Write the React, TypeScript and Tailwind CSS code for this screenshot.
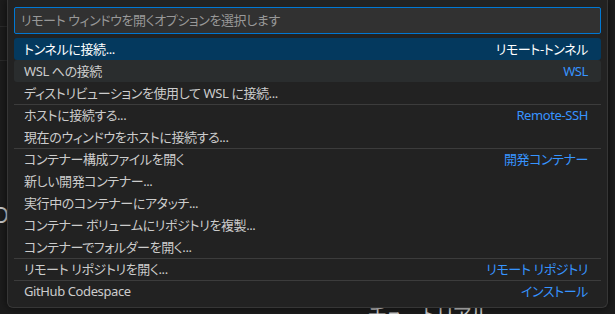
import React from "react";

type Item = {
  label: string;
  group?: string;
  separator?: boolean;
  state?: "active" | "hover";
};

const items: Item[] = [
  { label: "トンネルに接続...", group: "リモート-トンネル", state: "active" },
  { label: "WSL への接続", group: "WSL", state: "hover" },
  { label: "ディストリビューションを使用して WSL に接続..." },
  { label: "ホストに接続する...", group: "Remote-SSH", separator: true },
  { label: "現在のウィンドウをホストに接続する..." },
  { label: "コンテナー構成ファイルを開く", group: "開発コンテナー", separator: true },
  { label: "新しい開発コンテナー..." },
  { label: "実行中のコンテナーにアタッチ..." },
  { label: "コンテナー ボリュームにリポジトリを複製..." },
  { label: "コンテナーでフォルダーを開く..." },
  { label: "リモート リポジトリを開く...", group: "リモート リポジトリ", separator: true },
  { label: "GitHub Codespace", group: "インストール", separator: true },
];

function Row({ item }: { item: Item }) {
  const bg =
    item.state === "active"
      ? "bg-[#04395e] text-white rounded-[3px]"
      : item.state === "hover"
      ? "bg-[#2a2d2e] text-[#cccccc] rounded-[3px]"
      : "text-[#cccccc]";
  return (
    <div className={item.separator ? "border-t border-[#3c3c3c]" : ""}>
      <div
        className={`flex items-center justify-between pl-[10px] pr-[13px] pt-[1px] text-[13px] ${
          item.separator ? "h-[21px]" : "h-[22px]"
        } ${bg}`}
      >
        <span className="whitespace-nowrap">{item.label}</span>
        {item.group && (
          <span
            className={`whitespace-nowrap ${
              item.state === "active" ? "text-white" : "text-[#3794ff]"
            }`}
          >
            {item.group}
          </span>
        )}
      </div>
    </div>
  );
}

export default function App() {
  return (
    <div className="relative w-[615px] h-[314px] overflow-hidden bg-[#1c1c1c] font-['Noto_Sans','Noto_Sans_CJK_JP',sans-serif] [font-feature-settings:'palt'] tracking-[-0.4px] pl-[7px]">
      {/* editor content behind the quick pick */}
      <div className="absolute left-0 top-[26px] w-[8px] border-t border-[#2b2b2b]" />
      <div className="absolute left-0 top-[60px] w-[8px] border-t border-[#2b2b2b]" />
      <div className="absolute left-[-8px] top-[201px] text-[22px] leading-[26px] text-[#cccccc]">
        O
      </div>
      <div className="absolute left-[368px] top-[304px] text-[20px] leading-[24px] text-[#cccccc]">
        チュートリアル
      </div>

      {/* quick pick */}
      <div className="relative w-[601px] h-[308px] bg-[#222222] border-x border-b border-[#363636] rounded-b-[6px] shadow-[0_0_8px_rgba(0,0,0,0.6)] px-[6px] pt-[7px] flex flex-col gap-[4px]">
        <div className="h-[27px] flex items-center border border-[#0078d4] bg-[#313131] rounded-[2px] px-[6px] pt-[1px] text-[13px] text-[#989898]">
          リモート ウィンドウを開くオプションを選択します
        </div>
        <div className="flex flex-col">
          {items.map((it) => (
            <Row key={it.label} item={it} />
          ))}
        </div>
      </div>
    </div>
  );
}
